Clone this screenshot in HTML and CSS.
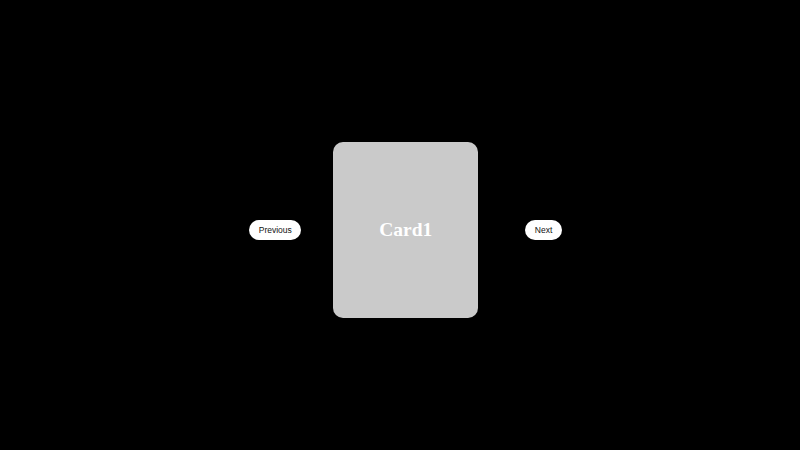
FILE: index.html
```html
<!DOCTYPE html>
<html>
<head>
<meta charset="utf-8">
<link rel="stylesheet" href="styles.css">
</head>
<body>
<div class="carousel">
  <button class="nav prev">Previous</button>
  <div class="card"><span class="card-title">Card1</span></div>
  <button class="nav next">Next</button>
</div>
</body>
</html>
```

FILE: styles.css
```css
html, body {
  margin: 0;
  padding: 0;
  background: #000;
}
body {
  width: 800px;
  height: 450px;
  overflow: hidden;
}
.carousel {
  box-sizing: border-box;
  height: 450px;
  padding-top: 10px;
  padding-left: 11px;
  display: flex;
  align-items: center;
  justify-content: center;
}
.nav {
  height: 20px;
  padding: 0 9.5px;
  border: none;
  border-radius: 10px;
  background: #fff;
  color: #111;
  font-family: "Liberation Sans", Arial, sans-serif;
  font-size: 8.5px;
  line-height: 20px;
  cursor: pointer;
}
.prev {
  margin-right: 32px;
}
.next {
  margin-left: 47px;
}
.card {
  width: 145px;
  height: 176px;
  border-radius: 10px;
  background: #cacaca;
  display: flex;
  align-items: center;
  justify-content: center;
}
.card-title {
  font-family: "Liberation Serif", "Times New Roman", serif;
  font-weight: bold;
  font-size: 19.5px;
  color: #fff;
}
```
